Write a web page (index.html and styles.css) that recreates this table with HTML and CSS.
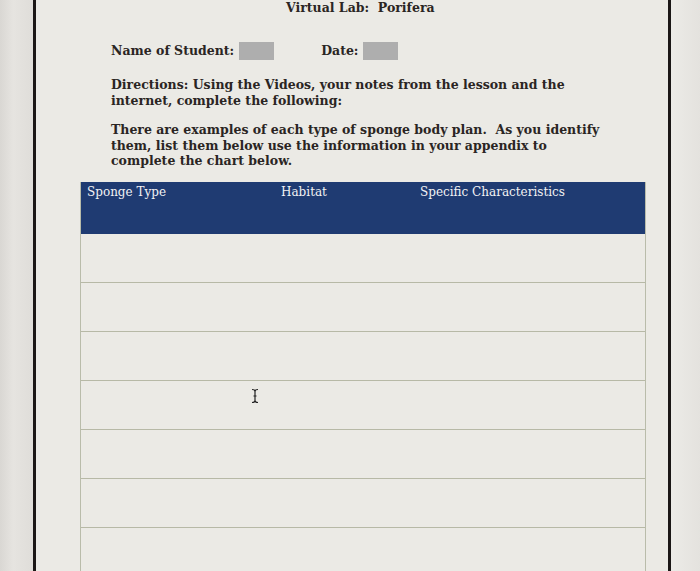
FILE: index.html
```html
<!DOCTYPE html>
<html>
<head>
<meta charset="utf-8">
<link rel="stylesheet" href="styles.css">
</head>
<body>
<div class="screen">
  <div class="bezel bezel-left"></div>
  <div class="page">
    <div class="title">Virtual Lab:&nbsp; Porifera</div>
    <div class="fields">
      <span class="label">Name of Student:</span><span class="box"></span>
      <span class="label date">Date:</span><span class="box"></span>
    </div>
    <p class="para">Directions: Using the Videos, your notes from the lesson and the<br>internet, complete the following:</p>
    <p class="para para2">There are examples of each type of sponge body plan.&nbsp; As you identify<br>them, list them below use the information in your appendix to<br>complete the chart below.</p>
    <div class="chart">
      <div class="head">
        <span class="h1">Sponge Type</span>
        <span class="h2">Habitat</span>
        <span class="h3">Specific Characteristics</span>
      </div>
      <div class="row"></div>
      <div class="row"></div>
      <div class="row"></div>
      <div class="row"></div>
      <div class="row"></div>
      <div class="row"></div>
      <div class="row"></div>
      <svg class="ibeam" width="8" height="16" viewBox="0 0 8 16"><path d="M1 1.5 Q4 1.5 4 3.5 Q4 1.5 7 1.5 M4 3.5 V12.5 M2.5 8 H5.5 M1 14.5 Q4 14.5 4 12.5 Q4 14.5 7 14.5" fill="none" stroke="#222" stroke-width="1.2"/></svg>
    </div>
  </div>
  <div class="bezel bezel-right"></div>
</div>
</body>
</html>
```
FILE: styles.css
```css
html, body {
  margin: 0;
  padding: 0;
  background: #e4e2de;
  overflow: hidden;
}
.screen {
  display: flex;
  width: 700px;
  height: 571px;
  overflow: hidden;
}
.bezel-left {
  width: 33px;
  flex: none;
  background: linear-gradient(90deg, #d9d7d3 0%, #e6e4e0 40%, #dfddd9 100%);
  border-right: 3px solid #1b1716;
}
.bezel-right {
  flex: 1;
  background: linear-gradient(90deg, #ecebe7 0%, #e4e2de 100%);
  border-left: 3px solid #1b1716;
}
.page {
  width: 632px;
  flex: none;
  background: #ebeae5;
  font-family: "DejaVu Serif", serif;
  color: #2a2523;
  position: relative;
}
.title {
  font-weight: bold;
  font-size: 12.5px;
  line-height: 16px;
  margin-top: 0;
  padding-left: 250px;
}
.fields {
  display: flex;
  align-items: center;
  margin-top: 26px;
  padding-left: 75px;
  font-weight: bold;
  font-size: 12.5px;
  line-height: 18px;
}
.box {
  display: inline-block;
  width: 35px;
  height: 18px;
  background: #aeaeae;
  margin-left: 5px;
}
.date {
  margin-left: 47px;
}
.para {
  margin: 0;
  padding-left: 75px;
  font-weight: bold;
  font-size: 12.5px;
  line-height: 15.5px;
  margin-top: 17px;
}
.para2 {
  margin-top: 14px;
}
.chart {
  position: relative;
  margin-left: 44px;
  margin-top: 13px;
  width: 564px;
  border-left: 1px solid #b9bcaa;
  border-right: 1px solid #b9bcaa;
}
.head {
  background: #1f3b72;
  height: 52px;
  display: flex;
  color: #f2f2f2;
  font-size: 12px;
  line-height: 18px;
  padding-top: 1px;
  box-sizing: border-box;
}
.h1 { padding-left: 6px; width: 194px; }
.h2 { width: 139px; }
.h3 { }
.row {
  height: 48px;
  border-bottom: 1px solid #b7b9a6;
}
.ibeam {
  position: absolute;
  left: 170px;
  top: 206px;
}
```
